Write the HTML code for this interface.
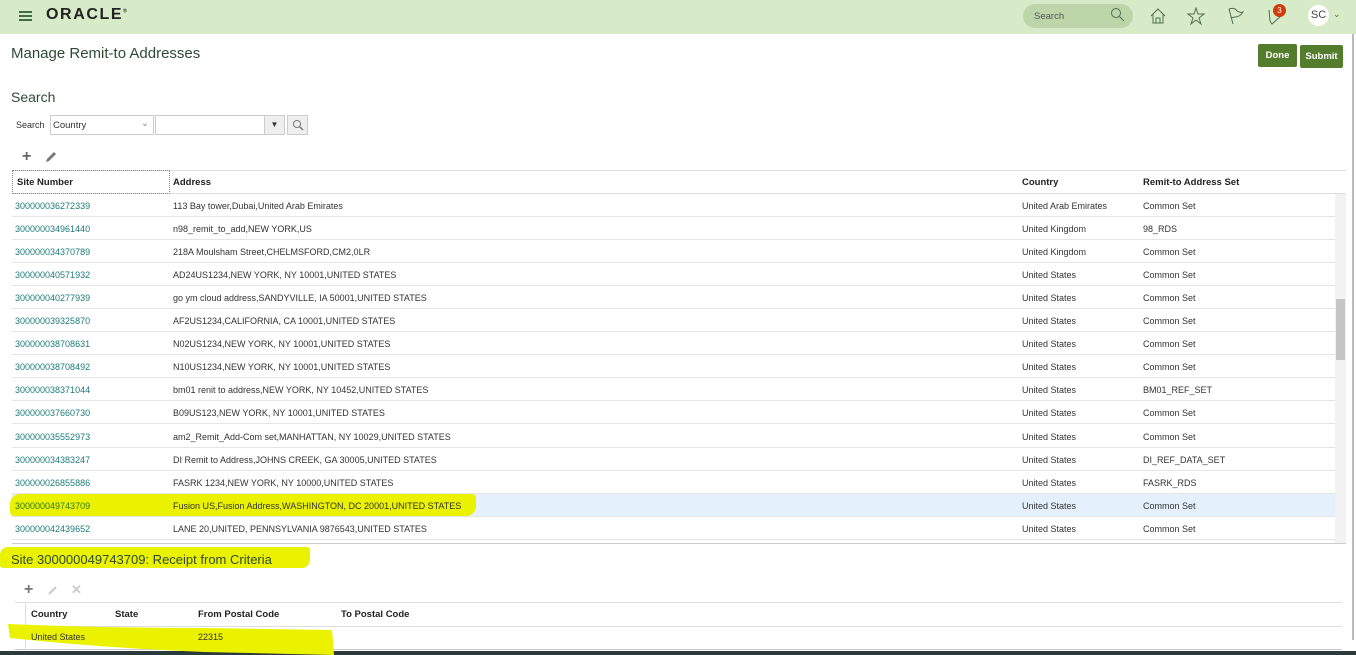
<!DOCTYPE html>
<html><head><style>
*{box-sizing:border-box;margin:0;padding:0}
body{width:1356px;height:655px;overflow:hidden;background:#fff;font-family:"Liberation Sans",Arial,sans-serif;position:relative;color:#333}
.a{position:absolute}
.top{left:0;top:0;width:1356px;height:34px;background:#d8ebc8}
.hl{background:#eaf200}
.row{position:absolute;left:12px;width:1323px;height:23px;border-bottom:1px solid #e5e5e5;font-size:9px}
.row span{position:absolute;top:7px}
.c1{left:3px;color:#1d7a7a}.c2{left:161px;color:#333}.c3{left:1010px}.c4{left:1131px}
.th{font-size:9.5px;font-weight:bold;color:#222}
.btn{background:#537d2c;color:#fff;font-weight:bold;font-size:9.5px;border-radius:2px;text-align:center;line-height:23px}
</style></head><body>
<div class="a top"></div>
<div class="a" style="left:19px;top:11px;width:13px;height:2px;background:#3d6e3d;box-shadow:0 4px 0 #3d6e3d,0 8px 0 #3d6e3d"></div>
<div class="a" style="left:46px;top:6px;font-size:16px;font-weight:bold;letter-spacing:1.6px;color:#222">ORACLE<sup style="font-size:5px">®</sup></div>
<div class="a" style="left:1023px;top:4px;width:110px;height:24px;background:#bcd6aa;border-radius:12px;font-size:9.5px;color:#555;padding:7px 0 0 11px">Search</div>
<svg class="a" style="left:1110px;top:7px" width="16" height="16"><circle cx="6" cy="6" r="4.5" fill="none" stroke="#4f6f4f"/><line x1="9.5" y1="9.5" x2="14" y2="14" stroke="#4f6f4f"/></svg>
<svg class="a" style="left:1149px;top:7px" width="18" height="18"><path d="M2 9 L9 2 L16 9 M4 7 V16 H14 V7 M7 16 V11 H11 V16" fill="none" stroke="#4f6f4f"/></svg>
<svg class="a" style="left:1187px;top:7px" width="18" height="18"><path d="M9 1 L11 7 L17 7 L12 11 L14 17 L9 13 L4 17 L6 11 L1 7 L7 7 Z" fill="none" stroke="#4f6f4f"/></svg>
<svg class="a" style="left:1227px;top:7px" width="18" height="18"><path d="M2 2 L6 17 M2 2 Q8 0 10 4 Q13 6 16 5 Q13 10 8 10 Q5 11 4 10" fill="none" stroke="#4f6f4f"/></svg>
<svg class="a" style="left:1266px;top:7px" width="18" height="18"><path d="M3 3 L4 14 L6 17 L15 9" fill="none" stroke="#4f6f4f"/></svg>
<div class="a" style="left:1273px;top:4px;width:13px;height:13px;border-radius:50%;background:#d03c0a;color:#fff;font-size:8px;text-align:center;line-height:13px">3</div>
<div class="a" style="left:1308px;top:5px;width:21px;height:21px;border-radius:50%;background:#fff;font-size:11px;text-align:center;line-height:21px;color:#444">SC</div>
<div class="a" style="left:1333px;top:9px;font-size:9px;color:#666">⌄</div>
<div class="a" style="left:1352px;top:34px;width:2px;height:606px;background:#bbb"></div>
<div class="a" style="left:0;top:651px;width:1356px;height:4px;background:#2b3a3a"></div>

<div class="a" style="left:11px;top:45px;font-size:15px;color:#2e4a35">Manage Remit-to Addresses</div>
<div class="a btn" style="left:1258px;top:44px;width:39px">Done</div>
<div class="a btn" style="left:1300px;top:45px;width:43px">Submit</div>
<div class="a" style="left:11px;top:89px;font-size:14px;color:#2e4a35">Search</div>
<div class="a" style="left:16px;top:120px;font-size:9px;color:#333">Search</div>
<div class="a" style="left:50px;top:115px;width:104px;height:20px;border:1px solid #ccc;font-size:9.5px;padding:4px 2px">Country<span style="position:absolute;right:4px;top:2px;color:#888">⌄</span></div>
<div class="a" style="left:155px;top:115px;width:130px;height:20px;border:1px solid #ccc"><div style="position:absolute;right:0;top:0;width:20px;height:18px;background:#eee;border-left:1px solid #ccc;font-size:8px;text-align:center;line-height:18px">▼</div></div>
<div class="a" style="left:287px;top:115px;width:21px;height:20px;border:1px solid #ccc;background:#eee"></div>
<svg class="a" style="left:292px;top:119px" width="12" height="12"><circle cx="5" cy="5" r="3.5" fill="none" stroke="#777"/><line x1="7.5" y1="7.5" x2="11" y2="11" stroke="#777" stroke-width="1.5"/></svg>
<div class="a" style="left:22px;top:148px;font-size:16px;font-weight:bold;color:#666">+</div>
<svg class="a" style="left:44px;top:150px" width="14" height="14"><path d="M2 12 L3 9 L10 2 L12 4 L5 11 Z" fill="#777"/></svg>

<div class="a" style="left:12px;top:170px;width:1334px;height:24px;border-top:1px solid #ddd;border-bottom:1px solid #ddd"></div>
<div class="a" style="left:12px;top:170px;width:158px;height:24px;border:1px dotted #888"></div>
<div class="a th" style="left:17px;top:177px">Site Number</div>
<div class="a th" style="left:173px;top:177px">Address</div>
<div class="a th" style="left:1022px;top:177px">Country</div>
<div class="a th" style="left:1143px;top:177px">Remit-to Address Set</div>
<div class="a" style="left:1335px;top:194px;width:11px;height:350px;background:#f2f2f2"></div>
<div class="a" style="left:1336px;top:299px;width:9px;height:61px;background:#c5c5c5"></div>
<div class="a" style="left:12px;top:543px;width:1334px;height:1px;background:#ccc"></div>

<div class="a" style="left:12px;top:494px;width:1323px;height:23px;background:#e4f0fb"></div>
<div class="a hl" style="left:10px;top:494px;width:466px;height:22px;border-radius:10px 4px 10px 4px"></div>
<div class="row" style="top:194px"><span class="c1">300000036272339</span><span class="c2">113 Bay tower,Dubai,United Arab Emirates</span><span class="c3">United Arab Emirates</span><span class="c4">Common Set</span></div>
<div class="row" style="top:217px"><span class="c1">300000034961440</span><span class="c2">n98_remit_to_add,NEW YORK,US</span><span class="c3">United Kingdom</span><span class="c4">98_RDS</span></div>
<div class="row" style="top:240px"><span class="c1">300000034370789</span><span class="c2">218A Moulsham Street,CHELMSFORD,CM2,0LR</span><span class="c3">United Kingdom</span><span class="c4">Common Set</span></div>
<div class="row" style="top:263px"><span class="c1">300000040571932</span><span class="c2">AD24US1234,NEW YORK, NY 10001,UNITED STATES</span><span class="c3">United States</span><span class="c4">Common Set</span></div>
<div class="row" style="top:286px"><span class="c1">300000040277939</span><span class="c2">go ym cloud address,SANDYVILLE, IA 50001,UNITED STATES</span><span class="c3">United States</span><span class="c4">Common Set</span></div>
<div class="row" style="top:309px"><span class="c1">300000039325870</span><span class="c2">AF2US1234,CALIFORNIA, CA 10001,UNITED STATES</span><span class="c3">United States</span><span class="c4">Common Set</span></div>
<div class="row" style="top:332px"><span class="c1">300000038708631</span><span class="c2">N02US1234,NEW YORK, NY 10001,UNITED STATES</span><span class="c3">United States</span><span class="c4">Common Set</span></div>
<div class="row" style="top:355px"><span class="c1">300000038708492</span><span class="c2">N10US1234,NEW YORK, NY 10001,UNITED STATES</span><span class="c3">United States</span><span class="c4">Common Set</span></div>
<div class="row" style="top:378px"><span class="c1">300000038371044</span><span class="c2">bm01 renit to address,NEW YORK, NY 10452,UNITED STATES</span><span class="c3">United States</span><span class="c4">BM01_REF_SET</span></div>
<div class="row" style="top:401px"><span class="c1">300000037660730</span><span class="c2">B09US123,NEW YORK, NY 10001,UNITED STATES</span><span class="c3">United States</span><span class="c4">Common Set</span></div>
<div class="row" style="top:425px"><span class="c1">300000035552973</span><span class="c2">am2_Remit_Add-Com set,MANHATTAN, NY 10029,UNITED STATES</span><span class="c3">United States</span><span class="c4">Common Set</span></div>
<div class="row" style="top:448px"><span class="c1">300000034383247</span><span class="c2">DI Remit to Address,JOHNS CREEK, GA 30005,UNITED STATES</span><span class="c3">United States</span><span class="c4">DI_REF_DATA_SET</span></div>
<div class="row" style="top:471px"><span class="c1">300000026855886</span><span class="c2">FASRK 1234,NEW YORK, NY 10000,UNITED STATES</span><span class="c3">United States</span><span class="c4">FASRK_RDS</span></div>
<div class="row" style="top:494px"><span class="c1" style="color:#2a7a2a">300000049743709</span><span class="c2">Fusion US,Fusion Address,WASHINGTON, DC 20001,UNITED STATES</span><span class="c3">United States</span><span class="c4">Common Set</span></div>
<div class="row" style="top:517px"><span class="c1">300000042439652</span><span class="c2">LANE 20,UNITED, PENNSYLVANIA 9876543,UNITED STATES</span><span class="c3">United States</span><span class="c4">Common Set</span></div>

<div class="a hl" style="left:0;top:547px;width:310px;height:21px;border-radius:8px 3px 8px 3px"></div>
<div class="a" style="left:11px;top:552px;font-size:13px;color:#2e4a35">Site 300000049743709: Receipt from Criteria</div>
<div class="a" style="left:24px;top:581px;font-size:16px;font-weight:bold;color:#777">+</div>
<svg class="a" style="left:47px;top:584px" width="12" height="12"><path d="M2 10 L9 3" stroke="#ccc" stroke-width="2"/></svg>
<div class="a" style="left:71px;top:582px;font-size:13px;color:#ccc;font-weight:bold">✕</div>
<div class="a" style="left:15px;top:602px;width:1327px;height:48px;border-top:1px solid #ddd"></div>
<div class="a" style="left:25px;top:602px;width:1px;height:48px;background:#ddd"></div>
<div class="a" style="left:15px;top:626px;width:1327px;height:1px;background:#ddd"></div>
<div class="a" style="left:15px;top:649px;width:1327px;height:1px;background:#ccc"></div>
<div class="a th" style="left:31px;top:609px">Country</div>
<div class="a th" style="left:115px;top:609px">State</div>
<div class="a th" style="left:198px;top:609px">From Postal Code</div>
<div class="a th" style="left:341px;top:609px">To Postal Code</div>
<svg class="a" style="left:4px;top:620px" width="332" height="35"><path d="M4 4 Q100 8 200 8 L328 10 L330 35 L200 32 Q100 28 6 18 Z" fill="#eaf200"/></svg>
<div class="a" style="left:31px;top:632px;font-size:9px">United States</div>
<div class="a" style="left:198px;top:632px;font-size:9px">22315</div>
</body></html>
